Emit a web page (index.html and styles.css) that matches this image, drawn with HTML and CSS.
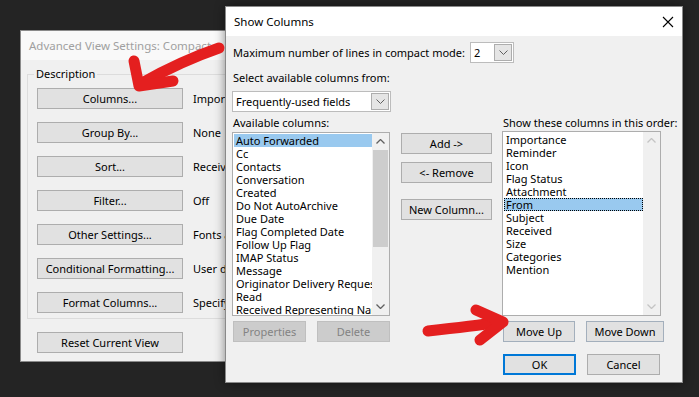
FILE: index.html
```html
<!DOCTYPE html>
<html lang="en">
<head>
    <meta charset="UTF-8">
    <title>Show Columns</title>
    <link rel="stylesheet" href="styles.css">
</head>
<body>
    <div class="desktop">
        <!-- hinteres Fenster -->
        <div class="window adv">
            <div class="titlebar inactive">Advanced View Settings: Compact</div>
            <div class="adv-body">
                <fieldset class="group">
                    <legend>Description</legend>
                    <div class="setting"><button class="btn">Columns...</button><span>Importance, Reminder, Icon</span></div>
                    <div class="setting"><button class="btn">Group By...</button><span>None</span></div>
                    <div class="setting"><button class="btn">Sort...</button><span>Received (descending)</span></div>
                    <div class="setting"><button class="btn">Filter...</button><span>Off</span></div>
                    <div class="setting"><button class="btn">Other Settings...</button><span>Fonts and other settings</span></div>
                    <div class="setting"><button class="btn">Conditional Formatting...</button><span>User defined fonts</span></div>
                    <div class="setting"><button class="btn">Format Columns...</button><span>Specify the display formats</span></div>
                </fieldset>
                <button class="btn reset">Reset Current View</button>
            </div>
        </div>

        <!-- vorderes Fenster -->
        <div class="window cols">
            <div class="titlebar">
                <span>Show Columns</span>
                <svg class="close" width="12" height="12" viewBox="0 0 12 12"><path d="M1 1 L11 11 M11 1 L1 11" stroke="#000" stroke-width="1.1" fill="none"/></svg>
            </div>
            <div class="cols-body">
                <div class="row-lines">
                    <span>Maximum number of lines in compact mode:</span>
                    <div class="combo small">
                        <span>2</span>
                        <div class="drop"><svg width="9" height="5" viewBox="0 0 9 5"><path d="M0.5 0.5 L4.5 4.5 L8.5 0.5" stroke="#606060" fill="none"/></svg></div>
                    </div>
                </div>
                <div class="label-from">Select available columns from:</div>
                <div class="combo wide">
                    <span>Frequently-used fields</span>
                    <div class="drop"><svg width="9" height="5" viewBox="0 0 9 5"><path d="M0.5 0.5 L4.5 4.5 L8.5 0.5" stroke="#606060" fill="none"/></svg></div>
                </div>

                <div class="columns">
                    <div class="col">
                        <div class="col-label">Available columns:</div>
                        <div class="listbox">
                            <ul class="items">
                                <li class="selected">Auto Forwarded</li>
                                <li>Cc</li>
                                <li>Contacts</li>
                                <li>Conversation</li>
                                <li>Created</li>
                                <li>Do Not AutoArchive</li>
                                <li>Due Date</li>
                                <li>Flag Completed Date</li>
                                <li>Follow Up Flag</li>
                                <li>IMAP Status</li>
                                <li>Message</li>
                                <li>Originator Delivery Requested</li>
                                <li>Read</li>
                                <li>Received Representing Name</li>
                            </ul>
                            <div class="scrollbar">
                                <div class="arrow"><svg width="9" height="5" viewBox="0 0 9 5"><path d="M0.5 4.5 L4.5 0.5 L8.5 4.5" stroke="#606060" stroke-width="1.3" fill="none"/></svg></div>
                                <div class="track"><div class="thumb"></div></div>
                                <div class="arrow"><svg width="9" height="5" viewBox="0 0 9 5"><path d="M0.5 0.5 L4.5 4.5 L8.5 0.5" stroke="#606060" stroke-width="1.3" fill="none"/></svg></div>
                            </div>
                        </div>
                        <div class="btn-row">
                            <button class="btn disabled w73">Properties</button>
                            <button class="btn disabled w73">Delete</button>
                        </div>
                    </div>

                    <div class="col middle">
                        <button class="btn">Add -&gt;</button>
                        <button class="btn">&lt;- Remove</button>
                        <button class="btn newcol">New Column...</button>
                    </div>

                    <div class="col">
                        <div class="col-label">Show these columns in this order:</div>
                        <div class="listbox right">
                            <ul class="items">
                                <li>Importance</li>
                                <li>Reminder</li>
                                <li>Icon</li>
                                <li>Flag Status</li>
                                <li>Attachment</li>
                                <li class="selected focus">From</li>
                                <li>Subject</li>
                                <li>Received</li>
                                <li>Size</li>
                                <li>Categories</li>
                                <li>Mention</li>
                            </ul>
                            <div class="scrollbar off">
                                <div class="arrow"><svg width="9" height="5" viewBox="0 0 9 5"><path d="M0.5 4.5 L4.5 0.5 L8.5 4.5" stroke="#c4c4c4" stroke-width="1.3" fill="none"/></svg></div>
                                <div class="track"></div>
                                <div class="arrow"><svg width="9" height="5" viewBox="0 0 9 5"><path d="M0.5 0.5 L4.5 4.5 L8.5 0.5" stroke="#c4c4c4" stroke-width="1.3" fill="none"/></svg></div>
                            </div>
                        </div>
                        <div class="btn-row">
                            <button class="btn move w72">Move Up</button>
                            <button class="btn move w78">Move Down</button>
                        </div>
                        <div class="btn-row ok-row">
                            <button class="btn default w73">OK</button>
                            <button class="btn w73">Cancel</button>
                        </div>
                    </div>
                </div>
            </div>
        </div>

        <!-- rote Pfeile -->
        <svg class="marks" width="699" height="397" viewBox="0 0 699 397">
            <g stroke="#e41f1f" stroke-width="11" stroke-linecap="round" stroke-linejoin="round" fill="none">
                <path d="M219 48 C190 58 165 70 142 83"/>
                <path d="M134 61 L139 86 L173 81"/>
                <path d="M428 331 C455 328 480 325 501 322"/>
                <path d="M476 310 L503 322 L480 340"/>
            </g>
        </svg>
    </div>
</body>
</html>
```

FILE: styles.css
```css
body {
    margin: 0;
    background-color: #242424;
    font-family: 'Segoe UI', 'Noto Sans', 'Open Sans', sans-serif;
    font-size: 11px;
    color: #000;
}
.desktop {
    position: relative;
    width: 699px;
    height: 397px;
    overflow: hidden;
}
.window {
    position: absolute;
    box-sizing: border-box;
    background-color: #f0f0f0;
    border: 1px solid #8a8a8a;
    display: flex;
    flex-direction: column;
}
.titlebar {
    height: 29px;
    flex: none;
    display: flex;
    align-items: center;
    justify-content: space-between;
    padding: 0 9px 0 8px;
    background-color: #fff;
    font-size: 11.5px;
}
.titlebar.inactive {
    color: #a0a0a0;
    background-color: #f9f9f9;
}
.close {
    margin-right: -1px;
}
button {
    font-family: inherit;
    font-size: 11px;
    color: #000;
}
.btn {
    box-sizing: border-box;
    height: 21px;
    padding: 0;
    background-color: #e1e1e1;
    border: 1px solid #adadad;
    white-space: nowrap;
}
.btn.disabled {
    background-color: #cccccc;
    border-color: #bfbfbf;
    color: #838383;
}
.btn.move {
    border-color: #a3afbc;
}
.btn.default {
    border: 2px solid #0078d7;
}
.w72 { width: 72px; }
.w73 { width: 73px; }
.w78 { width: 78px; }

/* Advanced View Settings */
.adv {
    left: 20px;
    top: 30px;
    width: 240px;
    height: 332px;
}
.adv-body {
    padding: 0 0 0 6px;
}
.group {
    margin: 7px 0 0 0;
    padding: 7px 0 5px 9px;
    border: 1px solid #dcdcdc;
    border-right: none;
    min-width: 0;
}
.group legend {
    padding: 0 2px;
    margin-left: -3px;
    line-height: 14px;
}
.setting {
    display: flex;
    align-items: center;
    gap: 10px;
    margin-bottom: 13px;
    white-space: nowrap;
}
.setting:last-child {
    margin-bottom: 0;
}
.setting .btn {
    width: 146px;
    flex: none;
}
.reset {
    width: 146px;
    margin: 13px 0 0 10px;
}

/* Show Columns */
.cols {
    left: 225px;
    top: 6px;
    width: 458px;
    height: 377px;
    box-shadow: 0 0 10px rgba(0, 0, 0, 0.45);
    z-index: 2;
}
.cols-body {
    padding: 6px 0 0 6px;
}
.row-lines {
    display: flex;
    align-items: center;
    gap: 5px;
    padding-left: 1px;
}
.combo {
    box-sizing: border-box;
    display: flex;
    align-items: center;
    justify-content: space-between;
    background-color: #fff;
    border: 1px solid #bcbcbc;
    padding: 1px 1px 1px 3px;
}
.combo.small {
    width: 44px;
    height: 21px;
}
.combo.wide {
    width: 159px;
    height: 21px;
}
.drop {
    box-sizing: border-box;
    width: 18px;
    height: 17px;
    background-color: #e5e5e5;
    border: 1px solid #adadad;
    display: flex;
    align-items: center;
    justify-content: center;
}
.label-from {
    margin: 8px 0 6px 1px;
    line-height: 14px;
}
.columns {
    display: grid;
    grid-template-columns: 158px 91px 163px;
    column-gap: 11px;
    margin-top: 4px;
}
.columns .col:nth-child(3) {
    margin-left: -1px;
}
.col-label {
    line-height: 14px;
    white-space: nowrap;
    padding-left: 1px;
}
.listbox {
    box-sizing: border-box;
    margin-top: 2px;
    width: 158px;
    height: 184px;
    background-color: #fff;
    border: 1px solid #adadad;
    display: flex;
    overflow: hidden;
}
.listbox.right {
    width: 159px;
    margin-top: 1px;
    height: 185px;
}
.items {
    list-style: none;
    margin: 0;
    padding: 1px 0 0 1px;
    flex: 1;
    min-width: 0;
    overflow: hidden;
}
.items li {
    box-sizing: border-box;
    height: 13px;
    line-height: 13px;
    padding-left: 2px;
    white-space: nowrap;
}
.items li.selected {
    background-color: #99c9ef;
}
.items li.focus {
    outline: 1px dotted #000;
    outline-offset: -1px;
}
.scrollbar {
    width: 17px;
    flex: none;
    display: flex;
    flex-direction: column;
    background-color: #f0f0f0;
}
.scrollbar .arrow {
    height: 17px;
    display: flex;
    align-items: center;
    justify-content: center;
}
.scrollbar .track {
    flex: 1;
}
.thumb {
    height: 97px;
    margin: 0 1px;
    background-color: #cdcdcd;
}
.btn-row {
    display: flex;
    gap: 11px;
    margin-top: 5px;
    margin-left: 1px;
}
.ok-row {
    margin-top: 12px;
}
.middle {
    display: flex;
    flex-direction: column;
    gap: 8px;
    padding-top: 17px;
}
.middle .btn {
    width: 91px;
}
.middle .newcol {
    margin-top: 8px;
}
.marks {
    position: absolute;
    left: 0;
    top: 0;
    z-index: 3;
}
```
